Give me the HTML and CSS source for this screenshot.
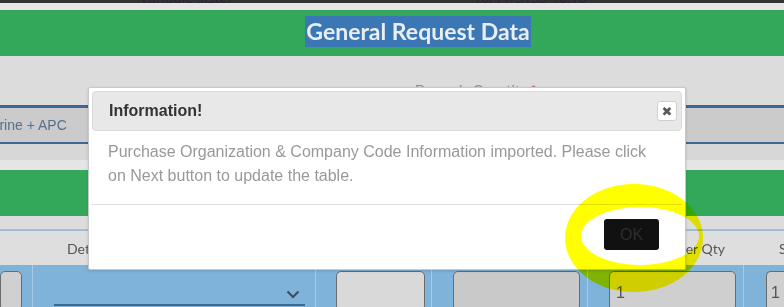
FILE: index.html
```html
<!DOCTYPE html>
<html>
<head>
<meta charset="utf-8">
<link rel="stylesheet" href="styles.css">
</head>
<body>
<div class="page">
  <div class="topstrip">
    <div class="ts-text"><span class="ts-a">Variable Sister</span><span class="ts-b">10/11/3133 10:10</span></div>
  </div>
  <div class="band band-title"><span class="title">General Request Data</span></div>
  <div class="sec">
    <div class="labels"><span class="lbl-dyn">Dynamic Quantity <span class="req">*</span></span></div>
    <div class="inrow"><span class="intext">Marine + APC</span></div>
    <div class="under"></div>
    <div class="under2"></div>
  </div>
  <div class="band band2"></div>
  <div class="gap"></div>
  <div class="grid thead">
    <div class="th"></div>
    <div class="th th-det">Determination Type</div>
    <div class="th"></div>
    <div class="th"></div>
    <div class="th th-qty">Order Qty</div>
    <div class="th th-s">Stock</div>
  </div>
  <div class="grid trow">
    <div class="cell c1"><div class="inp inp-a"></div></div>
    <div class="cell c2">
      <div class="select">
        <svg class="chev" width="14" height="9" viewBox="0 0 14 9"><path d="M1.5 1.5 L7 7 L12.5 1.5" fill="none" stroke="#3f4f5f" stroke-width="2.2"/></svg>
      </div>
    </div>
    <div class="cell c3"><div class="inp inp-b"></div></div>
    <div class="cell c4"><div class="inp inp-c"></div></div>
    <div class="cell c5"><div class="inp inp-d">1</div></div>
    <div class="cell c6"><div class="inp inp-a">1</div></div>
  </div>
</div>

<div class="modal">
  <div class="m-head">
    <span class="m-title">Information!</span>
    <span class="m-close">&#10006;</span>
  </div>
  <div class="m-body">Purchase Organization &amp; Company Code Information imported. Please click on Next button to update the table.</div>
  <div class="m-sep"></div>
  <div class="m-foot"><span class="m-ok">OK</span></div>
</div>

<svg class="marker" width="784" height="307" viewBox="0 0 784 307">
  <path fill="#ffff00" fill-rule="evenodd" d="M565 238 A69 54 0 1 0 703 238 A69 54 0 1 0 565 238 Z M581 236 A59 29 0 1 0 699 236 A59 29 0 1 0 581 236 Z"/>
</svg>
</body>
</html>
```

FILE: styles.css
```css
html, body {
  margin: 0;
  padding: 0;
}
body {
  width: 784px;
  height: 307px;
  overflow: hidden;
  position: relative;
  background: #dcdcdc;
  font-family: "Liberation Sans", Arial, sans-serif;
}
.page {
  display: flex;
  flex-direction: column;
}
.topstrip {
  height: 10px;
  background: linear-gradient(#333 0 3px, #e6e6e6 3px 10px);
  overflow: hidden;
}
.ts-text {
  margin-top: -10px;
  font-family: "Open Sans", sans-serif;
  font-size: 14px;
  line-height: 15px;
  color: #2a2338;
  display: flex;
}
.ts-a { margin-left: 140px; }
.ts-b { margin-left: 240px; }
.band {
  height: 46px;
  background: #34a85a;
}
.band-title {
  display: flex;
  justify-content: center;
  align-items: flex-start;
  padding-left: 52px;
  box-sizing: border-box;
  padding-top: 6px;
}
.title {
  background: #3a77b4;
  color: #e9eef4;
  font-family: "Lato", "Open Sans", sans-serif;
  font-weight: 700;
  font-size: 23px;
  line-height: 31px;
  padding: 0 1px;
}
.sec {
  display: flex;
  flex-direction: column;
}
.labels {
  height: 49px;
  box-sizing: border-box;
  padding: 25px 0 0 415px;
  font-family: "Lato", sans-serif;
  font-size: 14px;
  color: #888;
  overflow: hidden;
}
.req { color: #d9534f; }
.inrow {
  height: 34px;
  background: #cbcbcb;
  border-top: 3px solid #3d6794;
  border-bottom: 2px solid #3d6794;
  display: flex;
  align-items: center;
  overflow: hidden;
}
.intext {
  margin-left: -20px;
  font-size: 14px;
  color: #56708c;
  white-space: nowrap;
}
.under {
  height: 16px;
  background: #d7d7d7;
}
.under2 {
  height: 10px;
  background: #e5e5e5;
}
.gap {
  height: 13px;
  background: #dcdcdc;
  border-bottom: 2px solid #a3bbd2;
}
.grid {
  display: grid;
  grid-template-columns: 32px 283px 116px 156px 156px 1fr;
}
.thead {
  height: 34px;
  background: #dedede;
}
.th {
  display: flex;
  align-items: center;
  font-family: "Lato", sans-serif;
  font-size: 14px;
  color: #555;
  white-space: nowrap;
  overflow: hidden;
}
.th-det { padding-left: 35px; }
.th-qty { padding-left: 75px; }
.th-s { padding-left: 36px; }
.trow {
  background: #7fb3da;
  height: 42px;
}
.cell {
  box-sizing: border-box;
  padding: 6px 7px 0 21px;
  border-left: 1px solid #a9cbe6;
}
.c1 { padding: 6px 10px 0 0; border-left: 0; }
.c2 { padding-right: 10px; }
.c3 { padding-left: 20px; padding-right: 6px; }
.c6 { padding-left: 22px; padding-right: 0; }
.inp {
  height: 40px;
  box-sizing: border-box;
  border: 1px solid #6b6b6b;
  border-radius: 5px;
  padding: 12px 0 0 6px;
  font-size: 16px;
  color: #555;
}
.inp-a { background: #d0d0d0; }
.inp-b { background: #d9d9d9; }
.inp-c { background: #c9c9c9; }
.inp-d { background: #cfcfcf; }
.c6 .inp { border-right: 0; border-radius: 5px 0 0 5px; padding-left: 4px; }
.select {
  height: 28px;
  border-bottom: 2px solid #3d6794;
  display: flex;
  justify-content: flex-end;
  align-items: flex-end;
  padding: 0 5px 5px 0;
  box-sizing: content-box;
}
.chev { display: block; }

/* modal overlay */
.modal {
  position: absolute;
  left: 88px;
  top: 87px;
  width: 598px;
  height: 183px;
  box-sizing: border-box;
  background: #fff;
  border: 1px solid #c9c9c9;
  border-radius: 2px;
  box-shadow: 0 1px 3px rgba(0,0,0,0.15);
  z-index: 10;
}
.m-head {
  margin: 3px;
  height: 40px;
  box-sizing: border-box;
  background: #e8e8e8;
  border: 1px solid #dcdcdc;
  border-radius: 4px;
  display: flex;
  align-items: center;
  justify-content: space-between;
  padding: 0 4px 0 16px;
}
.m-title {
  font-weight: 700;
  font-size: 16px;
  color: #333;
}
.m-close {
  width: 20px;
  height: 20px;
  box-sizing: border-box;
  background: #fff;
  border: 1px solid #cfcfcf;
  border-radius: 3px;
  display: flex;
  align-items: center;
  justify-content: center;
  font-size: 13px;
  line-height: 1;
  color: #5a5a5a;
  font-family: "DejaVu Sans", sans-serif;
}
.m-body {
  padding: 6px 0 16px 19px;
  width: 550px;
  font-size: 16px;
  line-height: 24px;
  color: #999;
}
.m-sep {
  height: 1px;
  margin: 0 3px;
  background: #dedede;
}
.m-foot {
  display: flex;
  justify-content: flex-end;
  padding: 14px 26px 0 0;
}
.m-ok {
  width: 55px;
  height: 31px;
  background: #111;
  border-radius: 3px;
  color: #2e2e2e;
  font-size: 16px;
  display: flex;
  align-items: center;
  justify-content: center;
}
.marker {
  position: absolute;
  left: 0;
  top: 0;
  z-index: 20;
  mix-blend-mode: multiply;
  pointer-events: none;
}
```
